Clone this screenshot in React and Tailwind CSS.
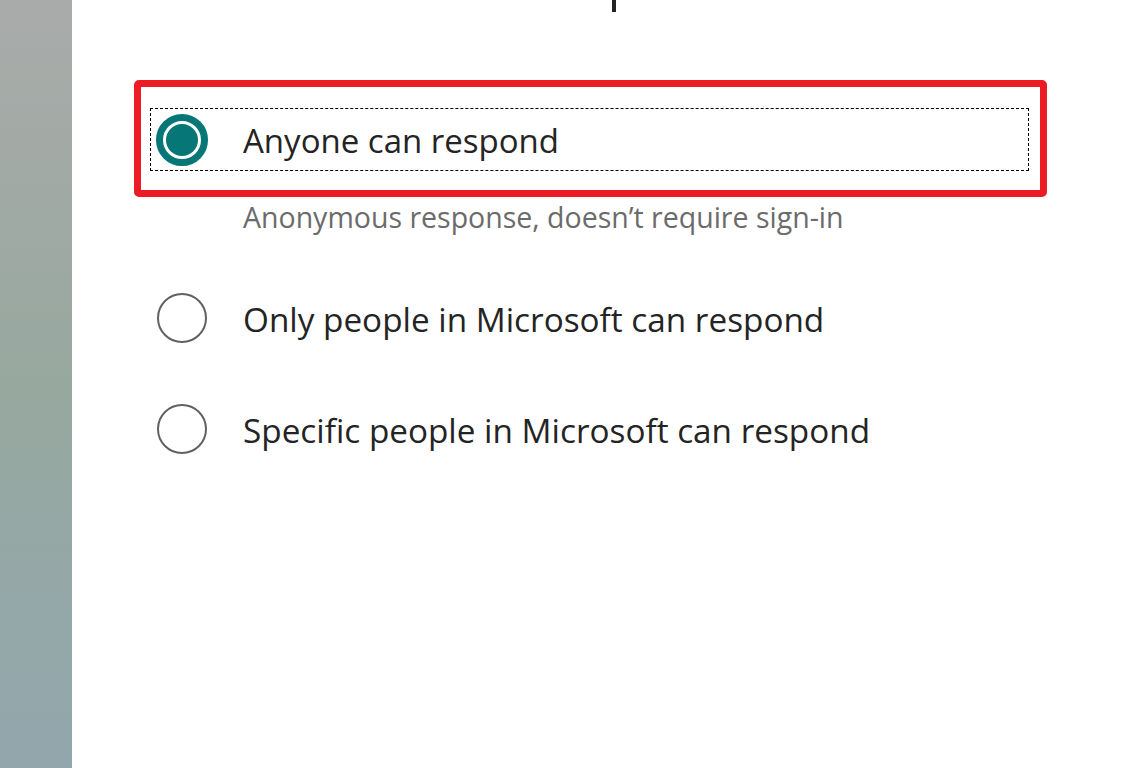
import React from "react";

const font = { fontFamily: '"Open Sans", "Noto Sans", sans-serif' };

function Radio({ checked }) {
  if (checked) {
    return (
      <span className="flex h-[52px] w-[52px] shrink-0 items-center justify-center rounded-full border-[7px] border-[#077676]">
        <span className="h-[32px] w-[32px] rounded-full bg-[#077676]" />
      </span>
    );
  }
  return <span className="h-[50px] w-[50px] shrink-0 rounded-full border-2 border-[#616161]" />;
}

function Option({ label }) {
  return (
    <div className="flex items-center pl-[23px]">
      <Radio />
      <span className="ml-[36px] pt-[1px] text-[33.3px] leading-[40px] text-[#242424]">{label}</span>
    </div>
  );
}

export default function App() {
  return (
    <div className="flex h-[768px] w-[1131px] overflow-hidden" style={font}>
      <div className="w-[72px] shrink-0 bg-gradient-to-b from-[#a9abaa] via-[#97a89f] to-[#93a6ad]" />
      <div className="flex-1 bg-white pl-[62px]">
        <div className="h-[80px] pl-[478px]">
          <div className="h-[12px] w-[4px] bg-[#242424]" />
        </div>
        <div className="flex h-[117px] w-[913px] items-center rounded-[5px] border-[7px] border-[#ed1c24] pl-[9px] pt-[2px]">
          <div className="flex h-[63px] w-[879px] items-center border border-dashed border-black pl-[5px]">
            <Radio checked />
            <span className="ml-[35px] pt-[3px] text-[33px] leading-[40px] text-[#242424]">Anyone can respond</span>
          </div>
        </div>
        <p className="mt-[3px] pl-[109px] text-[28.5px] leading-[34px] text-[#6b6b6b]">
          Anonymous response, doesn’t require sign-in
        </p>
        <div className="mt-[59px] flex flex-col gap-[61px]">
          <Option label="Only people in Microsoft can respond" />
          <Option label="Specific people in Microsoft can respond" />
        </div>
      </div>
    </div>
  );
}
